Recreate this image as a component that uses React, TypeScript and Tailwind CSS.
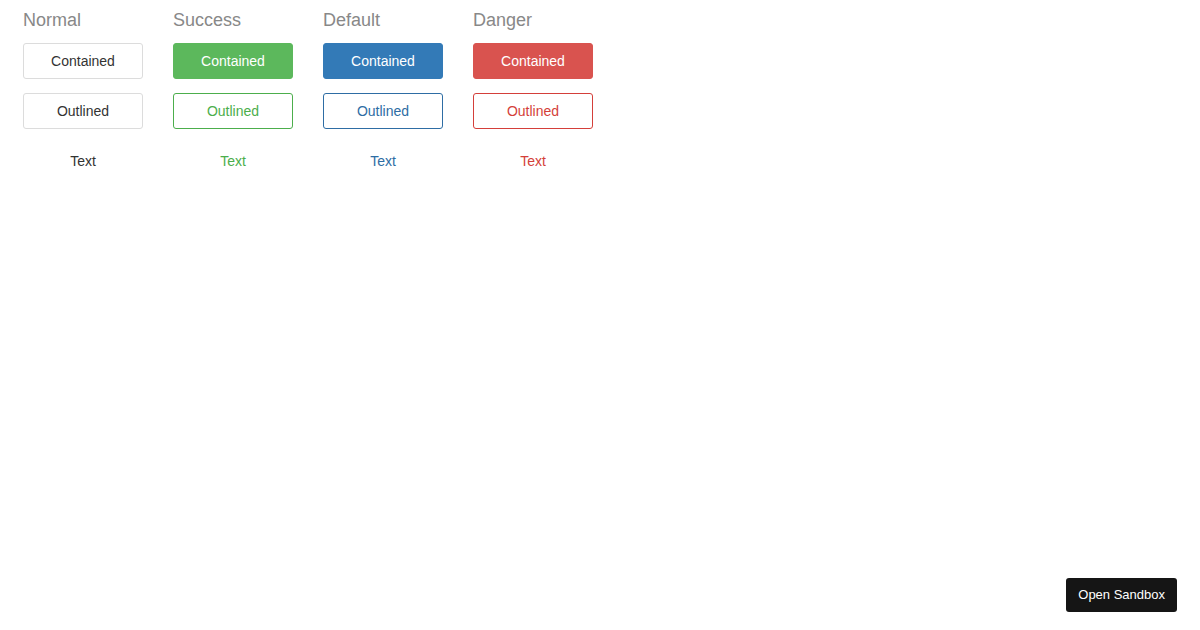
import React from 'react';

const groups = [
  {
    title: 'Normal',
    contained: 'bg-white text-[#333] border-[#dcdcdc]',
    outlined: 'border-[#dcdcdc] text-[#333]',
    text: 'text-[#333]',
  },
  {
    title: 'Success',
    contained: 'bg-[#5cb85c] text-white border-[#5cb85c]',
    outlined: 'border-[#4cae4c] text-[#4cae4c]',
    text: 'text-[#4cae4c]',
  },
  {
    title: 'Default',
    contained: 'bg-[#337ab7] text-white border-[#337ab7]',
    outlined: 'border-[#2e6da4] text-[#2e6da4]',
    text: 'text-[#2e6da4]',
  },
  {
    title: 'Danger',
    contained: 'bg-[#d9534f] text-white border-[#d9534f]',
    outlined: 'border-[#d43f3a] text-[#d43f3a]',
    text: 'text-[#d43f3a]',
  },
];

export default function App() {
  return (
    <div className="relative w-[1200px] h-[630px] bg-white font-['Liberation_Sans',Arial,sans-serif]">
      <div className="flex gap-[30px] pl-[23px] pt-[9px]">
        {groups.map(g => (
          <div key={g.title} className="flex flex-col w-[120px]">
            <h3 className="text-[18px] leading-[22px] text-[#888] mb-[12px]">{g.title}</h3>

            {/* Contained */}
            <button className={`h-[36px] w-[120px] rounded-[3px] border text-[14px] ${g.contained}`}>
              Contained
            </button>

            {/* Outlined */}
            <button className={`mt-[14px] h-[36px] w-[120px] rounded-[3px] border bg-white text-[14px] ${g.outlined}`}>
              Outlined
            </button>

            {/* Text */}
            <button className={`mt-[14px] h-[36px] w-[120px] text-[14px] ${g.text}`}>
              Text
            </button>
          </div>
        ))}
      </div>

      <button className="absolute right-[23px] bottom-[18px] h-[34px] px-[12px] rounded-[3px] bg-[#151515] text-white text-[13px]">
        Open Sandbox
      </button>
    </div>
  );
}
